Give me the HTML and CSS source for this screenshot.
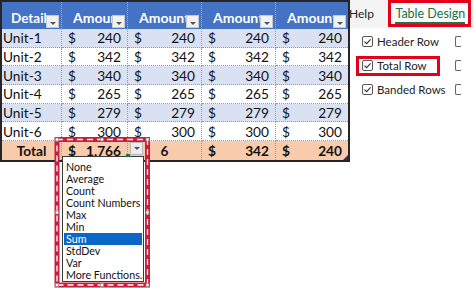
FILE: index.html
```html
<!DOCTYPE html>
<html>
<head>
<meta charset="utf-8">
<link rel="stylesheet" href="styles.css">
</head>
<body>
<div class="page">
  <div class="sheet">
    <div class="grid">
      <div class="row hd">
        <div><span>Detail</span><i class="flt"></i></div>
        <div><span>Amount</span><i class="flt"></i></div>
        <div><span>Amount</span><i class="flt"></i></div>
        <div><span>Amount</span><i class="flt"></i></div>
        <div><span>Amount</span><i class="flt"></i></div>
      </div>
      <div class="row band">
        <div class="l">Unit-1</div>
        <div><span>$</span><span>240</span></div>
        <div><span>$</span><span>240</span></div>
        <div><span>$</span><span>240</span></div>
        <div><span>$</span><span>240</span></div>
      </div>
      <div class="row">
        <div class="l">Unit-2</div>
        <div><span>$</span><span>342</span></div>
        <div><span>$</span><span>342</span></div>
        <div><span>$</span><span>342</span></div>
        <div><span>$</span><span>342</span></div>
      </div>
      <div class="row band">
        <div class="l">Unit-3</div>
        <div><span>$</span><span>340</span></div>
        <div><span>$</span><span>340</span></div>
        <div><span>$</span><span>340</span></div>
        <div><span>$</span><span>340</span></div>
      </div>
      <div class="row">
        <div class="l">Unit-4</div>
        <div><span>$</span><span>265</span></div>
        <div><span>$</span><span>265</span></div>
        <div><span>$</span><span>265</span></div>
        <div><span>$</span><span>265</span></div>
      </div>
      <div class="row band">
        <div class="l">Unit-5</div>
        <div><span>$</span><span>279</span></div>
        <div><span>$</span><span>279</span></div>
        <div><span>$</span><span>279</span></div>
        <div><span>$</span><span>279</span></div>
      </div>
      <div class="row">
        <div class="l">Unit-6</div>
        <div><span>$</span><span>300</span></div>
        <div><span>$</span><span>300</span></div>
        <div><span>$</span><span>300</span></div>
        <div><span>$</span><span>300</span></div>
      </div>
      <div class="row tot">
        <div class="ctr">Total</div>
        <div><span>$</span><span>1,766</span></div>
        <div class="ctr">6</div>
        <div><span>$</span><span>342</span></div>
        <div><span>$</span><span>240</span></div>
      </div>
    </div>
    <div class="resize"></div>
  </div>

  <div class="ribbon">
    <div class="tabs">
      <span class="help">Help</span>
      <span class="tdesign"><span class="tdtext">Table Design</span></span>
    </div>
    <div class="opts">
      <div class="opt">
        <div class="main"><span class="cb"><svg viewBox="0 0 11 11" width="11" height="11"><path d="M2.5 5.6 L4.6 7.6 L8.6 3.4" fill="none" stroke="#333" stroke-width="1.1"/></svg></span><span>Header Row</span></div>
        <span class="stub"></span>
      </div>
      <div class="opt">
        <div class="main"><span class="cb"><svg viewBox="0 0 11 11" width="11" height="11"><path d="M2.5 5.6 L4.6 7.6 L8.6 3.4" fill="none" stroke="#333" stroke-width="1.1"/></svg></span><span>Total Row</span></div>
        <span class="stub"></span>
        <span class="mark"></span>
      </div>
      <div class="opt">
        <div class="main"><span class="cb"><svg viewBox="0 0 11 11" width="11" height="11"><path d="M2.5 5.6 L4.6 7.6 L8.6 3.4" fill="none" stroke="#333" stroke-width="1.1"/></svg></span><span>Banded Rows</span></div>
        <span class="stub"></span>
      </div>
    </div>
  </div>

  <div class="dropdown">
    <svg class="frame" viewBox="0 0 96 151" width="96" height="151">
      <rect x="3" y="2.5" width="90.5" height="145.5" fill="none" stroke="#c91d3e" stroke-width="5"/>
      <rect x="3" y="2.5" width="90.5" height="145.5" fill="none" stroke="#fff" stroke-width="1.3" stroke-dasharray="6 4"/>
      <g fill="#fff" stroke="#8a8a8a" stroke-width="0.8">
        <rect x="1.5" y="1" width="3" height="3"/>
        <rect x="46.5" y="1" width="3" height="3"/>
        <rect x="92" y="1" width="3" height="3"/>
        <rect x="1.5" y="74" width="3" height="3"/>
        <rect x="92" y="74" width="3" height="3"/>
        <rect x="1.5" y="146.5" width="3" height="3"/>
        <rect x="46.5" y="146.5" width="3" height="3"/>
        <rect x="92" y="146.5" width="3" height="3"/>
      </g>
    </svg>
    <div class="btnrow"><span class="ddbtn"></span></div>
    <ul class="list">
      <li>None</li>
      <li>Average</li>
      <li>Count</li>
      <li>Count Numbers</li>
      <li>Max</li>
      <li>Min</li>
      <li class="sel">Sum</li>
      <li>StdDev</li>
      <li>Var</li>
      <li>More Functions...</li>
    </ul>
    <span class="fillh"></span>
  </div>
</div>
</body>
</html>
```
FILE: styles.css
```css
html, body {
  margin: 0;
  padding: 0;
  background: #fff;
}
.page {
  position: relative;
  width: 474px;
  height: 288px;
  display: flex;
  align-items: flex-start;
  overflow: hidden;
  font-family: Lato, "Liberation Sans", sans-serif;
}
.sheet {
  position: relative;
  width: 350px;
  flex: none;
  box-sizing: border-box;
  border: 2px solid #262626;
}
.grid {
  display: grid;
  grid-template-columns: 60px 66px 74px 74px 72px;
  grid-template-rows: 27px repeat(7, 18.7px);
}
.row { display: contents; }
.row > div {
  box-sizing: border-box;
  border-right: 1px dotted #9a9a9a;
  border-bottom: 1px dotted #9a9a9a;
  display: flex;
  align-items: center;
  justify-content: space-between;
  padding: 0 6px;
  font-size: 13.7px;
  color: #111;
  white-space: nowrap;
  overflow: hidden;
  background: #fff;
}
.row > div:last-child { border-right: none; }
.band > div { background: #d9e1f2; }
.row > div.l { justify-content: flex-start; padding-left: 1px; }
.row > div.ctr { justify-content: center; }
.tot > div {
  background: #f8cbad;
  font-weight: bold;
  border-bottom: none;
}
.hd > div {
  background: #4472c4;
  color: #fff;
  font-weight: bold;
  font-size: 14px;
  padding: 0 2px 0 11px;
  border-bottom: none;
  border-right: 1px dotted rgba(255,255,255,0.45);
}
.hd > div:first-child { padding-left: 9px; font-size: 13.5px; }
.hd span {
  flex: 1;
  overflow: hidden;
  margin-top: 4px;
}
.flt {
  flex: none;
  width: 13px;
  height: 13px;
  box-sizing: border-box;
  background: #f1f1f1;
  border: 1px solid #c9c9c9;
  align-self: flex-end;
  margin-bottom: 1px;
  display: flex;
  align-items: center;
  justify-content: center;
}
.flt::after {
  content: "";
  margin-top: 3px;
  border-left: 3px solid transparent;
  border-right: 3px solid transparent;
  border-top: 3.5px solid #555;
}
.resize {
  position: absolute;
  right: 0;
  bottom: 0;
  width: 0;
  height: 0;
  border-left: 5px solid transparent;
  border-bottom: 5px solid #3c2a5c;
}

/* ribbon */
.ribbon {
  flex: 1;
  height: 110px;
  overflow: hidden;
}
.tabs {
  height: 28px;
  background: #f3f3f3;
  display: flex;
  align-items: flex-start;
  font-size: 12px;
  color: #222;
}
.help {
  margin-left: -1px;
  margin-top: 6px;
}
.tdesign {
  margin-left: 14px;
  width: 83px;
  height: 27px;
  box-sizing: border-box;
  border: 3px solid #e2001a;
  display: flex;
  justify-content: center;
  align-items: flex-start;
  background: #fafafa;
}
.tdtext {
  color: #217346;
  font-size: 12.5px;
  padding-top: 3px;
  padding-bottom: 1px;
  border-bottom: 2px solid #217346;
  line-height: 15px;
  margin-left: 2px;
}
.opts { padding-top: 1px; }
.opt {
  position: relative;
  height: 24px;
  display: flex;
  align-items: center;
  padding-left: 12px;
  font-size: 11.5px;
  color: #222;
}
.opt .main {
  width: 93px;
  display: flex;
  align-items: center;
  gap: 4px;
}
.cb {
  width: 11px;
  height: 11px;
  box-sizing: border-box;
  border: 1px solid #555;
  border-radius: 2px;
  display: block;
  position: relative;
}
.cb svg { position: absolute; left: -1px; top: -1px; }
.stub {
  width: 6px;
  height: 11px;
  box-sizing: border-box;
  border: 1px solid #666;
  border-right: none;
  border-radius: 2px 0 0 2px;
}
.mark {
  position: absolute;
  left: 6px;
  top: 3px;
  width: 84px;
  height: 20px;
  box-sizing: border-box;
  border: 3px solid #e2001a;
}

/* dropdown overlay */
.dropdown {
  position: absolute;
  left: 54px;
  top: 137px;
  width: 96px;
  height: 151px;
  box-sizing: border-box;
  padding: 5px 6px 0 8px;
}
.frame {
  position: absolute;
  left: 0;
  top: 0;
}
.btnrow {
  height: 14px;
  display: flex;
  justify-content: flex-end;
  padding-right: 1px;
}
.ddbtn {
  width: 13px;
  height: 13px;
  box-sizing: border-box;
  background: #ececec;
  border: 1px solid #b9b9b9;
  display: flex;
  align-items: center;
  justify-content: center;
}
.ddbtn::after {
  content: "";
  border-left: 3px solid transparent;
  border-right: 3px solid transparent;
  border-top: 3.5px solid #555;
}
.list {
  position: relative;
  list-style: none;
  margin: 0;
  width: 82px;
  height: 126px;
  box-sizing: border-box;
  padding: 4px 1px 0 1px;
  border: 1px solid #3a3a3a;
  background: #fff;
  overflow: hidden;
}
.list li {
  height: 12px;
  line-height: 12px;
  font-size: 10.7px;
  padding-left: 2px;
  color: #111;
  white-space: nowrap;
}
.list li.sel {
  background: #0b67c6;
  color: #fff;
}
.fillh {
  position: absolute;
  left: 72px;
  top: 17px;
  width: 4px;
  height: 3px;
  background: #217346;
}
```
